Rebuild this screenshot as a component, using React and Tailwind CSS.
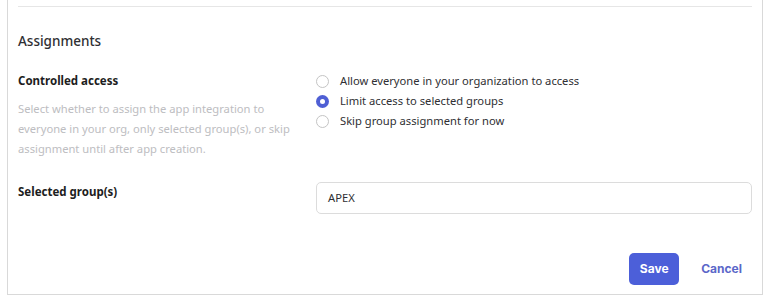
import React, { useState } from "react";

const OPTIONS = [
  { id: "all", label: "Allow everyone in your organization to access" },
  { id: "groups", label: "Limit access to selected groups" },
  { id: "skip", label: "Skip group assignment for now" },
];

function Radio({ checked }) {
  return checked ? (
    <span className="w-[13px] h-[13px] rounded-full bg-[#4f5fd4] flex items-center justify-center">
      <span className="w-[5px] h-[5px] rounded-full bg-white" />
    </span>
  ) : (
    <span className="w-[13px] h-[13px] rounded-full border border-[#c4c4c4] bg-white" />
  );
}

export default function App() {
  const [access, setAccess] = useState("groups");

  return (
    <div className="w-[768px] h-[304px] bg-white pl-[7px] pr-[5px] font-['Noto_Sans',sans-serif] text-[#1d1d21]">
      <div className="h-[295px] border-l border-r border-b border-[#d9d9d9] flex flex-col px-[10px]">
        <div className="mt-[6px] border-t border-[#e6e6e6]" />

        <h2 className="mt-[25px] text-[13.5px] font-medium leading-[18px] text-[#2f2f33]">
          Assignments
        </h2>

        {/* Controlled access */}
        <div className="mt-[24px] flex">
          <div className="w-[298px] shrink-0">
            <div className="text-[11.5px] font-bold leading-[14px] text-[#1d1d21]">
              Controlled access
            </div>
            <p className="mt-[11px] w-[275px] text-[11.2px] leading-[20px] text-[#bdbdc1]">
              Select whether to assign the app integration to everyone in your org, only selected group(s), or skip
              assignment until after app creation.
            </p>
          </div>
          <div className="flex flex-col -mt-[3px]">
            {OPTIONS.map((o) => (
              <label
                key={o.id}
                onClick={() => setAccess(o.id)}
                className="h-[20px] flex items-center gap-[11px] text-[11.2px] text-[#2f2f33] cursor-pointer"
              >
                <Radio checked={access === o.id} />
                <span>{o.label}</span>
              </label>
            ))}
          </div>
        </div>

        {/* Selected groups */}
        <div className="mt-[23px] flex">
          <div className="w-[298px] shrink-0 pt-[3px] text-[11.5px] font-bold leading-[14px]">
            Selected group(s)
          </div>
          <div className="flex-1 h-[32px] border border-[#dcdcdc] rounded-[5px] flex items-center px-[11px] text-[11.2px] text-[#2f2f33]">
            APEX
          </div>
        </div>

        <div className="mt-[39px] flex justify-end items-center gap-[22px] pr-[10px] font-['Inter',sans-serif]">
          <button className="w-[50px] h-[32px] rounded-[5px] bg-[#4c5fd9] text-white text-[12px] font-bold">
            Save
          </button>
          <button className="text-[12px] font-bold text-[#5b67c9]">Cancel</button>
        </div>
      </div>
    </div>
  );
}
